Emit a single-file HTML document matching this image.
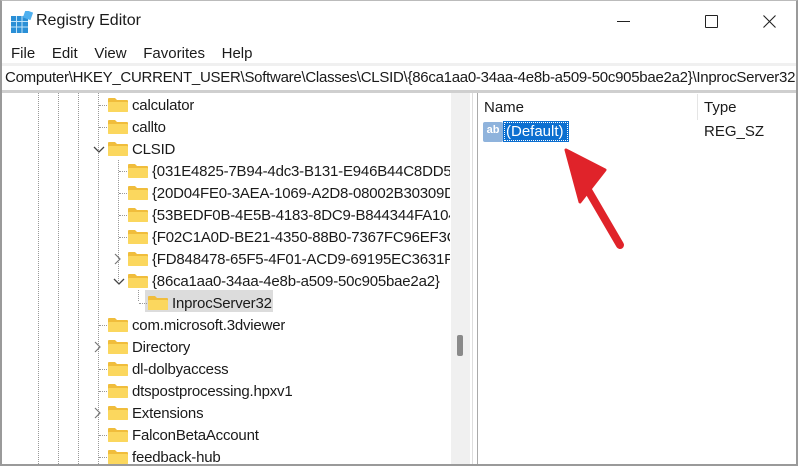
<!DOCTYPE html>
<html><head><style>
body{margin:0;width:798px;height:466px;overflow:hidden;background:#fff;font-family:"Liberation Sans",sans-serif;position:relative;font-size:14.5px;color:#1a1a1a}
.a{position:absolute;white-space:nowrap}
.f{position:absolute;width:20px;height:14px}
.dv{position:absolute;width:0;border-left:1px dotted #999}
.dh{position:absolute;height:0;width:8px;border-top:1px dotted #999}
.ch{position:absolute;color:#777;font-size:13px}
</style></head><body>
<div class="a" style="left:0;top:0;width:798px;height:466px;border:2px solid #9a9a9a;border-top:1px solid #bbb;box-sizing:border-box;right:0"></div>
<svg class="a" style="left:11px;top:11px" width="22" height="22" viewBox="0 0 22 22">
<rect x="0" y="5" width="17" height="17" fill="#2a8fd6"/>
<g stroke="#bfe3fa" stroke-width="1"><line x1="0" y1="10.5" x2="17" y2="10.5"/><line x1="0" y1="16" x2="17" y2="16"/><line x1="5.5" y1="5" x2="5.5" y2="22"/><line x1="11" y1="5" x2="11" y2="22"/></g>
<rect x="13" y="0" width="8" height="8" fill="#4fb0ef" transform="rotate(20 17 4)"/>
</svg>
<div class="a" style="left:36px;top:12px;font-size:16px">Registry Editor</div>
<div class="a" style="left:617px;top:21px;width:13px;height:1px;background:#222"></div>
<div class="a" style="left:705px;top:15px;width:11px;height:11px;border:1px solid #222;border-radius:1px"></div>
<svg class="a" style="left:763px;top:15px" width="13" height="13"><path d="M0.5 0.5L12.5 12.5M12.5 0.5L0.5 12.5" stroke="#222" stroke-width="1.1"/></svg>
<div class="a" style="left:11px;top:45px;font-size:15px;word-spacing:0">File&nbsp;&nbsp;&nbsp; Edit&nbsp;&nbsp;&nbsp; View&nbsp;&nbsp;&nbsp; Favorites&nbsp;&nbsp;&nbsp; Help</div>
<div class="a" style="left:2px;top:63px;width:794px;height:3px;background:#f0f0f0"></div>
<div class="a" style="left:5px;top:69px;font-size:15px;letter-spacing:-0.27px">Computer\HKEY_CURRENT_USER\Software\Classes\CLSID\{86ca1aa0-34aa-4e8b-a509-50c905bae2a2}\InprocServer32</div>
<div class="a" style="left:2px;top:90px;width:794px;height:3px;background:#cfcfcf"></div>
<div class="a" style="left:451px;top:93px;width:19px;height:371px;background:#f0f0f0"></div>
<div class="a" style="left:457px;top:335px;width:6px;height:21px;background:#8a8a8a;border-radius:2px"></div>
<div class="a" style="left:472px;top:93px;width:1px;height:371px;background:#ddd"></div>
<div class="a" style="left:477px;top:93px;width:1px;height:371px;background:#aaa"></div>
<div class="dv" style="left:38px;top:93px;height:371px"></div>
<div class="dv" style="left:58px;top:93px;height:371px"></div>
<div class="dv" style="left:78px;top:93px;height:371px"></div>
<div class="dv" style="left:98px;top:93px;height:371px"></div>
<div class="dv" style="left:118px;top:160px;height:121px"></div>
<div class="dv" style="left:138px;top:290px;height:11px"></div>
<div class="a" style="left:145px;top:290px;width:128px;height:22px;background:#dcdcdc"></div>
<div id="tree"></div>
<div class="a" style="left:484px;top:99px;font-size:15px">Name</div>
<div class="a" style="left:697px;top:94px;width:1px;height:26px;background:#e5e5e5"></div>
<div class="a" style="left:704px;top:99px;font-size:15px">Type</div>
<div class="a" style="left:483px;top:122px;width:20px;height:20px;background:#8fb3dc;border-radius:2px;color:#fff;font-size:11px;font-weight:bold;line-height:16px;text-align:center">ab</div>
<div class="a" style="left:503px;top:121px;width:66px;height:21px;background:#0c6fd0;outline:1px dotted #fff;outline-offset:-2px"></div>
<div class="a" style="left:506px;top:123px;font-size:15px;color:#fff">(Default)</div>
<div class="a" style="left:704px;top:123px;font-size:15px">REG_SZ</div>
<svg class="a" style="left:560px;top:145px" width="80" height="110"><line x1="60" y1="100" x2="25" y2="40" stroke="#e0232a" stroke-width="8" stroke-linecap="round"/><path d="M6 5L45 25L20 57Z" fill="#e0232a" stroke="#e0232a" stroke-width="3" stroke-linejoin="round"/></svg>
<script>
var rows=[[108,'calculator',0],[108,'callto',0],[108,'CLSID',2],[128,'{031E4825-7B94-4dc3-B131-E946B44C8DD5}',0],[128,'{20D04FE0-3AEA-1069-A2D8-08002B30309D}',0],[128,'{53BEDF0B-4E5B-4183-8DC9-B844344FA104}',0],[128,'{F02C1A0D-BE21-4350-88B0-7367FC96EF3C}',0],[128,'{FD848478-65F5-4F01-ACD9-69195EC3631F}',1],[128,'{86ca1aa0-34aa-4e8b-a509-50c905bae2a2}',2],[148,'InprocServer32',0],[108,'com.microsoft.3dviewer',0],[108,'Directory',1],[108,'dl-dolbyaccess',0],[108,'dtspostprocessing.hpxv1',0],[108,'Extensions',1],[108,'FalconBetaAccount',0],[108,'feedback-hub',0]];
var h='';rows.forEach(function(r,i){var y=94+22*i;var x=r[0];
if(r[2]==1)h+='<svg class="a" style="left:'+(x-14)+'px;top:'+(y+5)+'px" width="8" height="12"><path d="M1 1L6 6L1 11" fill="none" stroke="#777" stroke-width="1.2"/></svg>';
else if(r[2]==2)h+='<svg class="a" style="left:'+(x-15)+'px;top:'+(y+8)+'px" width="12" height="8"><path d="M1 1L6 6L11 1" fill="none" stroke="#444" stroke-width="1.3"/></svg>';
else h+='<div class="dh" style="left:'+(x-9)+'px;top:'+(y+11)+'px"></div>';
h+='<svg class="f" style="left:'+x+'px;top:'+(y+4)+'px" viewBox="0 0 20 14"><path d="M0 1Q0 0 1 0H7L9 2H19Q20 2 20 3V13Q20 14 19 14H1Q0 14 0 13Z" fill="#f0bd3c"/><rect x="0" y="4" width="20" height="10" rx="1" fill="#fbd75e"/></svg>';
h+='<div class="a" style="left:'+(x+24)+'px;top:'+(y+3)+'px;font-size:15px;letter-spacing:-0.2px;max-width:'+(450-x-24)+'px;overflow:hidden">'+r[1]+'</div>';});
document.getElementById('tree').innerHTML=h;
</script>
</body></html>
